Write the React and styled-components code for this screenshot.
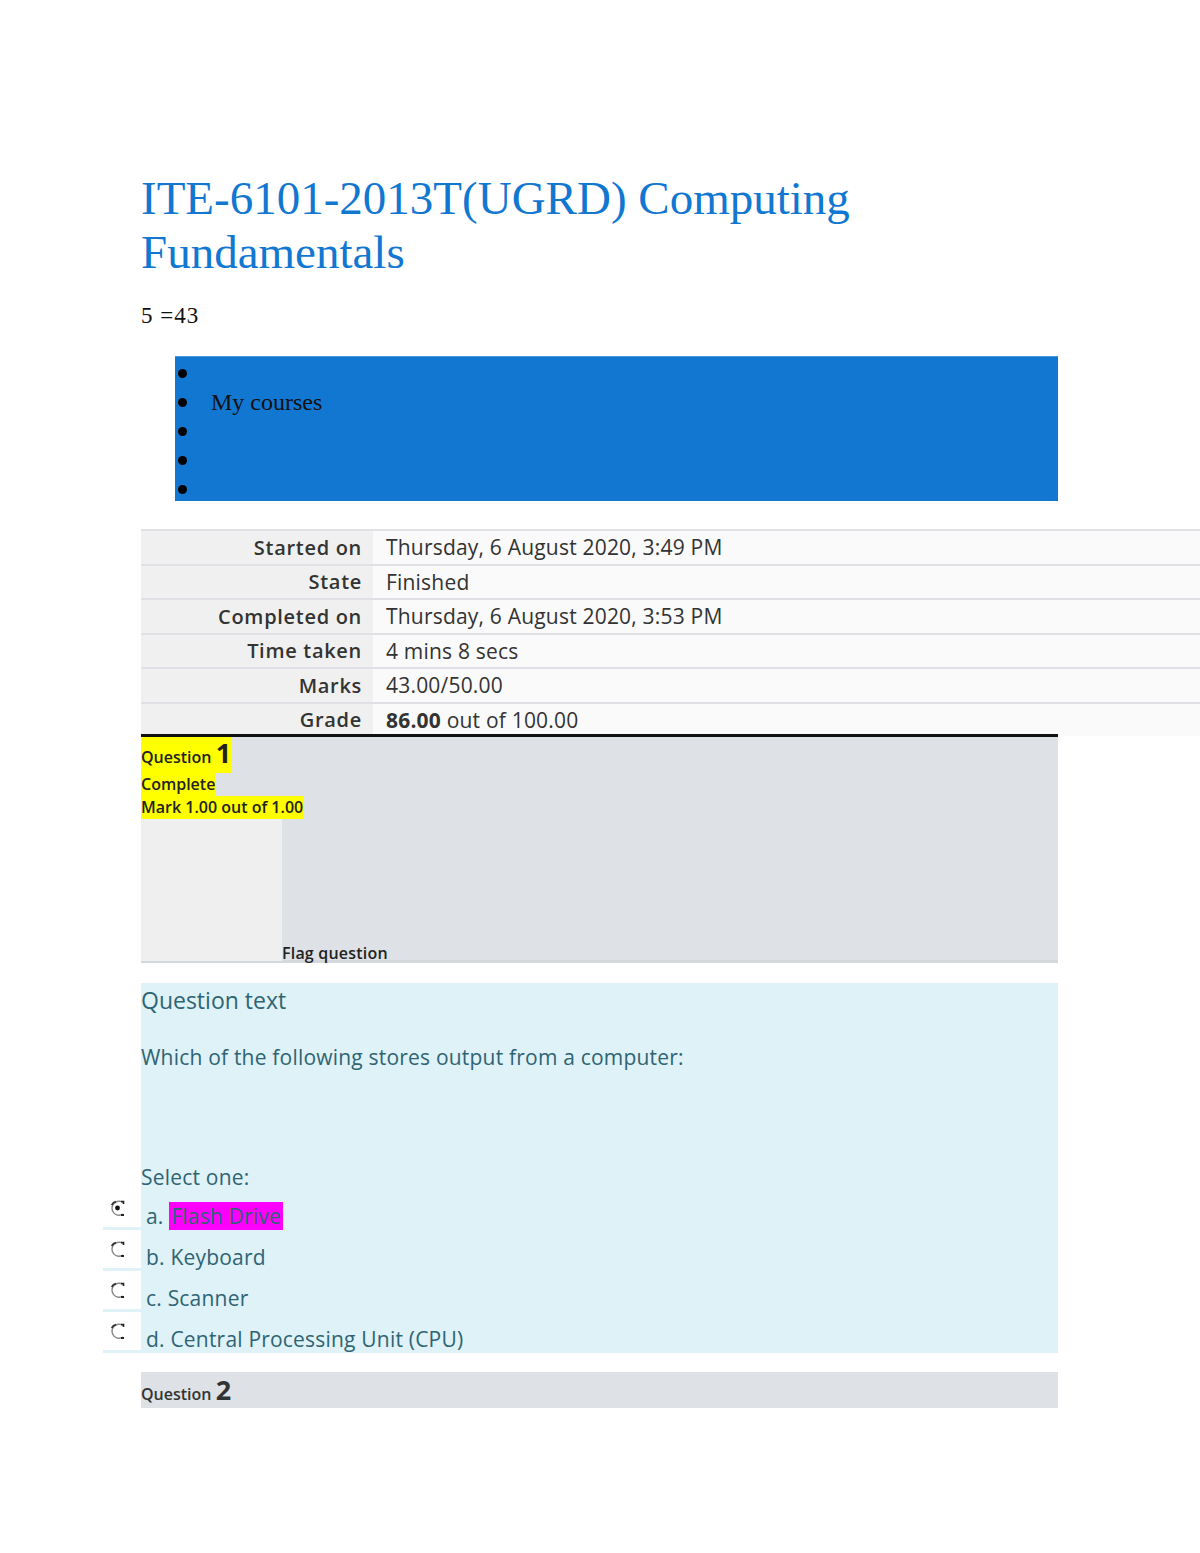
import React from 'react';
import styled, { createGlobalStyle } from 'styled-components';

const GlobalStyle = createGlobalStyle`
  html, body {
    margin: 0;
    padding: 0;
    background: #ffffff;
  }
  body {
    font-family: "Liberation Serif", serif;
  }
`;

const Page = styled.div`
  width: 1200px;
  min-height: 1553px;
  padding: 171px 0 0 141px;
  box-sizing: border-box;
  overflow: hidden;
`;

const Title = styled.h1`
  margin: 0;
  width: 760px;
  font-family: "Liberation Serif", serif;
  font-weight: normal;
  font-size: 47px;
  line-height: 54px;
  color: #1177d1;
`;

const Score = styled.p`
  margin: 24px 0 0;
  font-family: "Liberation Serif", serif;
  font-size: 23px;
  line-height: 26px;
  letter-spacing: 1px;
  color: #111;
`;

const Nav = styled.ul`
  margin: 27px 0 0 34px;
  width: 883px;
  height: 145px;
  box-sizing: border-box;
  padding: 2px 0 0 0;
  background: #1177d1;
  border-top: 1px solid #4a97dd;
  list-style: none;
`;

const NavItem = styled.li`
  position: relative;
  height: 29px;
  padding-left: 36px;
  font-family: "Liberation Serif", serif;
  font-size: 24px;
  line-height: 29px;
  color: #111;

  &::before {
    content: '';
    position: absolute;
    left: 3px;
    top: 10px;
    width: 9px;
    height: 9px;
    border-radius: 50%;
    background: #000;
  }
`;

const Summary = styled.table`
  margin-top: 28px;
  width: 1059px;
  border-collapse: collapse;
  font-family: "Open Sans", sans-serif;
`;

const Row = styled.tr`
  border-top: 2px solid #dfe1e5;
`;

const Label = styled.th`
  width: 232px;
  height: 32.5px;
  padding: 0 11px 0 0;
  box-sizing: border-box;
  background: #f0f0f0;
  text-align: right;
  font-size: 20px;
  font-weight: 600;
  letter-spacing: 0.7px;
  color: #333;
  white-space: nowrap;
`;

const Value = styled.td`
  height: 32.5px;
  padding: 0 0 0 13px;
  background: #fafafa;
  font-size: 21px;
  color: #333;
  letter-spacing: 0.2px;
  white-space: nowrap;

  b {
    font-weight: 700;
  }
`;

const Rule = styled.div`
  width: 917px;
  height: 3px;
  background: #111;
  margin-top: -2px;
  position: relative;
`;

const Info = styled.div`
  width: 917px;
  height: 226px;
  box-sizing: border-box;
  background: #dee2e6;
  border-bottom: 3px solid #d3d8dd;
  display: flex;
  flex-direction: column;
  align-items: flex-start;
  font-family: "Open Sans", sans-serif;
  color: #222;
`;

const Mark = styled.span`
  background: #ffff00;
  font-size: ${p => p.size || 16}px;
  line-height: ${p => p.lh || 23}px;
  font-weight: 600;
  letter-spacing: 0;

  strong {
    font-size: 27px;
    font-weight: 700;
  }
`;

const FlagRow = styled.div`
  display: flex;
  align-items: flex-end;
`;

const FlagBox = styled.div`
  width: 141px;
  height: 142px;
  background: #efefef;
`;

const FlagText = styled.span`
  font-size: 16px;
  font-weight: 600;
  letter-spacing: 0.2px;
  line-height: 20px;
  margin-bottom: -2px;
`;

const Content = styled.div`
  margin-top: 20px;
  width: 917px;
  box-sizing: border-box;
  background: #def2f8;
  font-family: "Open Sans", sans-serif;
  color: #2f6473;
`;

const QuestionHead = styled.h4`
  margin: 0;
  padding-top: 1px;
  font-weight: normal;
  font-size: 23px;
  line-height: 32px;
  letter-spacing: 0;
`;

const Prompt = styled.p`
  margin: 26px 0 0;
  font-size: 21px;
  line-height: 30px;
  letter-spacing: 0.2px;
  height: 120px;
`;

const Prompt2 = styled(Prompt)`
  margin: 0;
  height: 27px;
`;

const Answer = styled.div`
  display: flex;
  margin-left: -38px;
  height: 41px;
`;

const RadioCell = styled.div`
  width: 38px;
  box-sizing: border-box;
  background: #fff;
  border-bottom: 3px solid #def2f8;
  padding: 9px 0 0 4px;
`;

const AnswerText = styled.div`
  padding: 12px 0 0 5px;
  font-size: 21px;
  line-height: 30px;
  letter-spacing: 0.2px;
  white-space: nowrap;

  mark {
    background: #ff00ff;
    color: #2f6473;
    padding: 0 2px;
  }
`;

const NextQ = styled.div`
  margin-top: 19px;
  width: 917px;
  height: 36px;
  background: #dee2e6;
  font-family: "Open Sans", sans-serif;
  color: #333;
  display: flex;
  align-items: flex-end;

  span {
    font-size: 16px;
    font-weight: 600;
    letter-spacing: 0;
    line-height: 28px;
  }

  strong {
    font-size: 27px;
    font-weight: 700;
  }
`;

const Radio = ({ checked }) => (
  <svg width="22" height="22" viewBox="0 0 22 22">
    <path d="M16 4.5 A7 7 0 1 0 16 16" fill="none" stroke="#888" strokeWidth="1.4" />
    <path d="M9 3.6 A7 7 0 0 0 4.6 7" fill="none" stroke="#333" strokeWidth="1.6" />
    <path d="M14 3.5 L16.5 3.5 L16.5 6" fill="none" stroke="#222" strokeWidth="1.6" />
    <path d="M14 17 L17 17" stroke="#222" strokeWidth="2" />
    {checked && <circle cx="10.5" cy="10" r="2.4" fill="#111" />}
  </svg>
);

const rows = [
  ['Started on', 'Thursday, 6 August 2020, 3:49 PM'],
  ['State', 'Finished'],
  ['Completed on', 'Thursday, 6 August 2020, 3:53 PM'],
  ['Time taken', '4 mins 8 secs'],
  ['Marks', '43.00/50.00'],
];

const answers = [
  ['a.', 'Flash Drive', true],
  ['b.', 'Keyboard'],
  ['c.', 'Scanner'],
  ['d.', 'Central Processing Unit (CPU)'],
];

const App = () => (
  <>
    <GlobalStyle />
    <Page>
      <Title>ITE-6101-2013T(UGRD) Computing Fundamentals</Title>
      <Score>5 =43</Score>

      <Nav>
        <NavItem />
        <NavItem>My courses</NavItem>
        <NavItem />
        <NavItem />
        <NavItem />
      </Nav>

      <Summary>
        <tbody>
          {rows.map(([k, v]) => (
            <Row key={k}>
              <Label>{k}</Label>
              <Value>{v}</Value>
            </Row>
          ))}
          <Row>
            <Label>Grade</Label>
            <Value><b>86.00</b> out of 100.00</Value>
          </Row>
        </tbody>
      </Summary>
      <Rule />

      <Info>
        <Mark lh={32}>Question <strong>1</strong></Mark>
        <Mark>Complete</Mark>
        <Mark>Mark 1.00 out of 1.00</Mark>
        <FlagRow>
          <FlagBox />
          <FlagText>Flag question</FlagText>
        </FlagRow>
      </Info>

      <Content>
        <QuestionHead>Question text</QuestionHead>
        <Prompt>Which of the following stores output from a computer:</Prompt>
        <Prompt2>Select one:</Prompt2>
        {answers.map(([l, t, sel]) => (
          <Answer key={l}>
            <RadioCell><Radio checked={sel} /></RadioCell>
            <AnswerText>
              {l} {sel ? <mark>{t}</mark> : t}
            </AnswerText>
          </Answer>
        ))}
      </Content>

      <NextQ>
        <span>Question <strong>2</strong></span>
      </NextQ>
    </Page>
  </>
);

export default App;
